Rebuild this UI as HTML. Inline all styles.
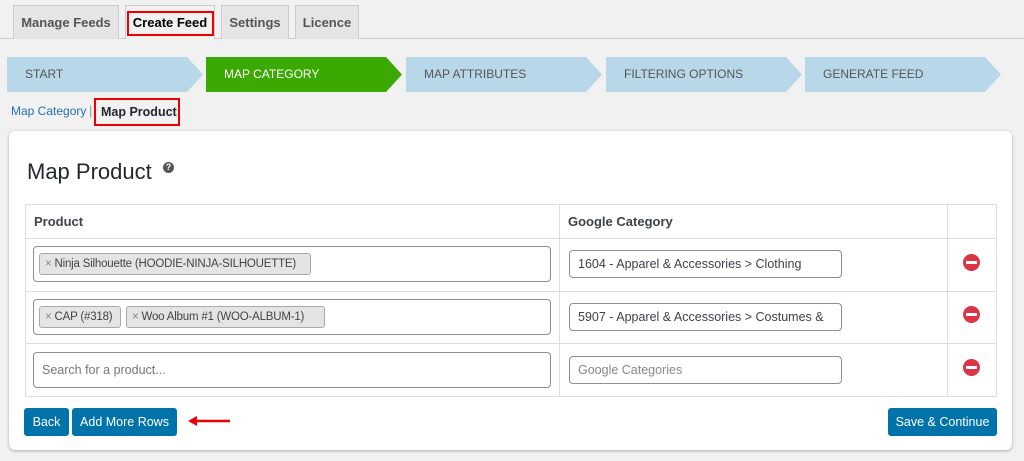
<!DOCTYPE html>
<html><head><style>
body{margin:0;width:1024px;height:461px;background:#f1f1f1;font-family:"Liberation Sans",sans-serif;position:relative;overflow:hidden;color:#23282d}
.a{position:absolute;box-sizing:border-box;white-space:nowrap}
.tab{top:5px;height:34px;background:#e5e5e5;border:1px solid #ccc;border-bottom:none;font-size:13px;font-weight:bold;color:#555;text-align:center;line-height:33px}
.step{top:57px;height:35px;background:#b8d8ea;color:#555;font-size:12px;line-height:35px;padding-left:18px;clip-path:polygon(0 0,180px 0,196px 50%,180px 100%,0 100%)}
.inp{border:1px solid #8c8f94;border-radius:4px;background:#fff}
.chip{position:absolute;top:6px;height:22px;background:#e4e4e4;border:1px solid #aaa;border-radius:3px;font-size:11.5px;letter-spacing:-0.2px;line-height:21px;padding:0 5px;color:#444;box-sizing:border-box;white-space:nowrap;overflow:hidden}
.chip b{font-weight:normal;color:#888;margin-right:3px}
.gc{width:273px;height:28px;font-size:12.5px;line-height:26px;padding-left:8px;color:#3c434a;left:569px;overflow:hidden}
.min{width:17px;height:17px;border-radius:50%;background:#dc3545;left:963px}
.min:after{content:"";position:absolute;left:3px;right:3px;top:7px;height:3px;background:#fff}
.btn{top:408px;height:28px;background:#0073aa;border-radius:3px;color:#fff;font-size:12.5px;line-height:28px;text-align:center}
</style></head><body>
<div class="a" style="left:0;right:0;top:38px;height:1px;background:#ccc"></div>
<div class="a tab" style="left:13px;width:106px">Manage Feeds</div>
<div class="a tab" style="left:125px;width:90px;background:#f1f1f1;color:#000;height:34px"><div class="a" style="left:1px;top:5px;width:87px;height:25px;border:2px solid #e00"></div>Create Feed</div>
<div class="a tab" style="left:221px;width:68px">Settings</div>
<div class="a tab" style="left:295px;width:64px">Licence</div>

<div class="a step" style="left:7px;width:196px">START</div>
<div class="a step" style="left:206px;width:196px;background:#3aa902;color:#fff">MAP CATEGORY</div>
<div class="a step" style="left:406px;width:196px">MAP ATTRIBUTES</div>
<div class="a step" style="left:606px;width:196px">FILTERING OPTIONS</div>
<div class="a step" style="left:805px;width:196px">GENERATE FEED</div>

<div class="a" style="left:11px;top:104px;font-size:12px;color:#2271b1">Map Category</div>
<div class="a" style="left:89px;top:103px;font-size:13px;color:#999">|</div>
<div class="a" style="left:94px;top:98px;width:86px;height:28px;border:2px solid #e00;font-size:12.5px;font-weight:bold;line-height:24px;padding-left:5px">Map Product</div>

<div class="a" style="left:9px;top:131px;width:1003px;height:319px;background:#fff;border-radius:6px;box-shadow:0 1px 3px rgba(0,0,0,.3)"></div>
<div class="a" style="left:27px;top:159px;font-size:22px;color:#23282d">Map Product</div>
<div class="a" style="left:163px;top:162px;width:11px;height:11px;border-radius:50%;background:#555;color:#fff;font-size:9px;line-height:11px;text-align:center;font-weight:bold">?</div>

<div class="a" style="left:25px;top:204px;width:972px;height:193px;border:1px solid #ddd"></div>
<div class="a" style="left:25px;top:238px;width:972px;height:1px;background:#ddd"></div>
<div class="a" style="left:25px;top:291px;width:972px;height:1px;background:#ddd"></div>
<div class="a" style="left:25px;top:343px;width:972px;height:1px;background:#ddd"></div>
<div class="a" style="left:559px;top:204px;width:1px;height:193px;background:#ddd"></div>
<div class="a" style="left:947px;top:204px;width:1px;height:193px;background:#ddd"></div>
<div class="a" style="left:34px;top:214px;font-size:13px;font-weight:bold;color:#3c434a">Product</div>
<div class="a" style="left:568px;top:214px;font-size:13px;font-weight:bold;color:#3c434a">Google Category</div>

<div class="a inp" style="left:33px;top:246px;width:518px;height:36px"><div class="chip" style="left:5px;width:272px"><b>×</b>Ninja Silhouette (HOODIE-NINJA-SILHOUETTE)</div></div>
<div class="a inp" style="left:33px;top:299px;width:518px;height:36px"><div class="chip" style="left:5px;width:82px"><b>×</b>CAP (#318)</div><div class="chip" style="left:92px;width:199px"><b>×</b>Woo Album #1 (WOO-ALBUM-1)</div></div>
<div class="a inp" style="left:33px;top:352px;width:518px;height:36px;font-size:12.5px;line-height:34px;padding-left:8px;color:#777">Search for a product...</div>

<div class="a inp gc" style="top:250px">1604 - Apparel &amp; Accessories &gt; Clothing</div>
<div class="a inp gc" style="top:303px">5907 - Apparel &amp; Accessories &gt; Costumes &amp;</div>
<div class="a inp gc" style="top:356px;color:#888">Google Categories</div>
<div class="a min" style="top:254px"></div>
<div class="a min" style="top:306px"></div>
<div class="a min" style="top:359px"></div>

<div class="a btn" style="left:24px;width:45px">Back</div>
<div class="a btn" style="left:72px;width:105px">Add More Rows</div>
<svg class="a" style="left:186px;top:415px" width="46" height="12"><path d="M44 6H10" stroke="#e00" stroke-width="2.5"/><path d="M2 6L11 1V11Z" fill="#e00"/></svg>
<div class="a btn" style="left:888px;width:109px">Save &amp; Continue</div>
</body></html>
